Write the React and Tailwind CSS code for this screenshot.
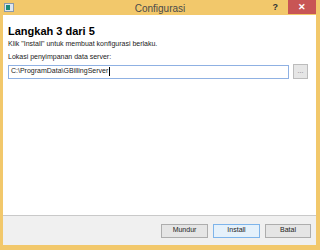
export default function App() {
  return (
    <div className="w-[320px] h-[250px] bg-[#f2c86b] flex flex-col font-['Liberation_Sans',sans-serif] overflow-hidden">
      <div className="h-[15px] relative flex items-center">
        <div className="ml-[4px] w-[10px] h-[9px] bg-[#dfe6ee] border border-[#8a9aad] flex items-center pl-[1px]">
          <div className="w-[4px] h-[5px] bg-[#1d8a7a]" />
        </div>
        <div className="absolute left-0 right-0 top-[1px] text-center text-[10px] text-[#4a4a4a]">Configurasi</div>
        <div className="ml-auto flex items-start h-full">
          <span className="text-[9px] font-bold text-[#333] mr-[10px] mt-[1px]">?</span>
          <div className="w-[28px] h-[14px] bg-[#c85555] flex items-center justify-center mr-[4px]">
            <span className="text-white text-[9px] font-bold leading-none">✕</span>
          </div>
        </div>
      </div>
      <div className="flex-1 ml-[3px] mr-[4px] mb-[5px] flex flex-col">
        <div className="flex-1 bg-white px-[5px] pt-[11px]">
          <div className="text-[11px] font-bold text-black leading-[11px]">Langkah 3 dari 5</div>
          <div className="text-[7px] leading-[9px] text-[#222] mt-[2px]">Klik "Install" untuk membuat konfigurasi berlaku.</div>
          <div className="text-[7px] leading-[9px] text-[#222] mt-[4px]">Lokasi penyimpanan data server:</div>
          <div className="flex items-center mt-[3px]">
            <div className="w-[281px] h-[14px] border border-[#8fb1e3] flex items-center px-[2px] text-[7px] text-[#222]">
              C:\ProgramData\GBillingServer<span className="w-px h-[9px] bg-black ml-px" />
            </div>
            <div className="ml-[4px] w-[15px] h-[15px] bg-[#e6e6e6] border border-[#bcbcbc] flex items-center justify-center text-[7px] text-[#777]">...</div>
          </div>
        </div>
        <div className="h-[30px] bg-[#f0f0f0] border-t border-[#c9c9c9] flex items-center justify-end gap-[5px] pr-[5px]">
          <div className="w-[47px] h-[14px] bg-[#e5e5e5] border border-[#adadad] flex items-center justify-center text-[7px] text-[#222]">Mundur</div>
          <div className="w-[47px] h-[14px] bg-[#e5f1fb] border border-[#7eb4ea] flex items-center justify-center text-[7px] text-[#222]">Install</div>
          <div className="w-[46px] h-[14px] bg-[#e5e5e5] border border-[#adadad] flex items-center justify-center text-[7px] text-[#222]">Batal</div>
        </div>
      </div>
    </div>
  );
}
